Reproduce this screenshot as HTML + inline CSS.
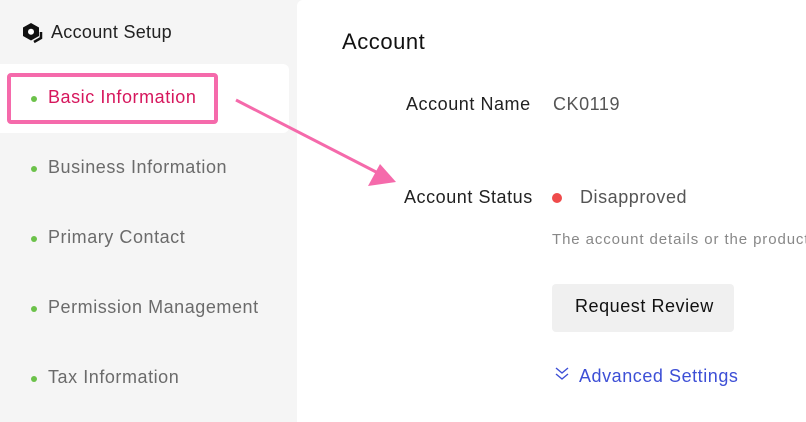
<!DOCTYPE html>
<html><head><style>
*{margin:0;padding:0;box-sizing:border-box}
body{width:806px;height:422px;overflow:hidden;background:#f5f5f5;font-family:"Liberation Sans",sans-serif;position:relative;letter-spacing:0.55px}
.t{position:absolute;white-space:nowrap}
.side{font-size:18px;color:#6b6b6b}
.dot{position:absolute;width:6px;height:6px;border-radius:50%;background:#6cc24a}
</style></head><body>
<div style="position:absolute;left:297px;top:0;width:509px;height:422px;background:#fff;border-radius:6px 0 0 0"></div>
<div style="position:absolute;left:0;top:64px;width:289px;height:69px;background:#fff;border-radius:0 6px 6px 0"></div>
<svg style="position:absolute;left:21px;top:22px" width="24" height="24" viewBox="0 0 24 24"><path d="M10 1 L18 5.5 L18 14 L10 18.5 L2 14 L2 5.5Z" fill="#111"/><circle cx="10" cy="9.8" r="3" fill="#fff"/><path d="M20 10 L20 16 L13 20" stroke="#111" stroke-width="2.5" fill="none"/></svg>
<div class="t" style="left:51px;top:22px;font-size:18px;color:#222;letter-spacing:0.3px">Account Setup</div>
<div style="position:absolute;left:7px;top:73px;width:211px;height:51px;border:4px solid #f56aab;border-radius:4px"></div>
<div class="dot" style="left:31px;top:96px"></div>
<div class="t side" style="left:48px;top:87px;color:#d6175d">Basic Information</div>
<div class="dot" style="left:31px;top:166px"></div><div class="t side" style="left:48px;top:157px">Business Information</div>
<div class="dot" style="left:31px;top:236px"></div><div class="t side" style="left:48px;top:227px">Primary Contact</div>
<div class="dot" style="left:31px;top:306px"></div><div class="t side" style="left:48px;top:297px">Permission Management</div>
<div class="dot" style="left:31px;top:376px"></div><div class="t side" style="left:48px;top:367px">Tax Information</div>
<svg style="position:absolute;left:0;top:0" width="806" height="422"><line x1="236" y1="100" x2="380" y2="174" stroke="#f56aab" stroke-width="3"/><path d="M396 182 L368 186 L380 164Z" fill="#f56aab"/></svg>
<div class="t" style="left:342px;top:29px;font-size:22px;color:#111">Account</div>
<div class="t" style="left:406px;top:94px;font-size:18px;color:#222">Account Name</div>
<div class="t" style="left:553px;top:94px;font-size:18px;color:#555">CK0119</div>
<div class="t" style="left:404px;top:187px;font-size:18px;color:#222">Account Status</div>
<div style="position:absolute;left:552px;top:193px;width:10px;height:10px;border-radius:50%;background:#ef4b4b"></div>
<div class="t" style="left:580px;top:187px;font-size:18px;color:#555">Disapproved</div>
<div class="t" style="left:552px;top:231px;font-size:15px;color:#888;letter-spacing:0.9px">The account details or the product</div>
<div style="position:absolute;left:552px;top:284px;width:182px;height:48px;background:#f0f0f0;border-radius:4px"></div>
<div class="t" style="left:575px;top:296px;font-size:18px;color:#111">Request Review</div>
<svg style="position:absolute;left:554px;top:367px" width="16" height="14" viewBox="0 0 16 14"><path d="M2 1 L8 6 L14 1 M2 7 L8 12 L14 7" stroke="#3d4fd6" stroke-width="1.4" fill="none"/></svg>
<div class="t" style="left:579px;top:366px;font-size:18px;color:#3d4fd6">Advanced Settings</div>
</body></html>
